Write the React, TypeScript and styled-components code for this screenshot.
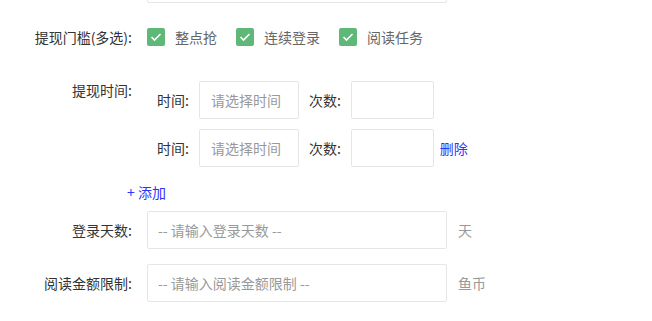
import styled, { createGlobalStyle } from "styled-components";

const Global = createGlobalStyle`
  html, body {
    margin: 0;
    padding: 0;
    background: #fff;
    overflow: hidden;
  }
  body {
    font-family: "Noto Sans CJK SC", "Noto Sans", sans-serif;
    font-size: 14px;
    color: #333;
  }
`;

const Form = styled.div`
  margin-top: -35px;
  display: flex;
  flex-direction: column;
`;

const Item = styled.div`
  display: flex;
  align-items: flex-start;
  margin-bottom: 15px;
`;

const Label = styled.label`
  width: 132px;
  margin-right: 15px;
  flex-shrink: 0;
  text-align: right;
  line-height: 20px;
  padding: 9px 0;
  white-space: nowrap;
  color: #333;
`;

const Block = styled.div`
  display: flex;
  align-items: center;
  min-height: 38px;
`;

const Input = styled.div<{ $w: number; $pad?: number }>`
  box-sizing: border-box;
  width: ${(p) => p.$w}px;
  height: 38px;
  border: 1px solid #e6e6e6;
  border-radius: 2px;
  padding-left: ${(p) => p.$pad ?? 10}px;
  display: flex;
  align-items: center;
  color: #999;
  white-space: nowrap;
`;

const Unit = styled.span`
  margin-left: 11px;
  color: #999;
`;

const Checks = styled.div`
  display: flex;
  align-items: center;
  gap: 19px;
  height: 38px;
`;

const Check = styled.div`
  display: flex;
  align-items: center;
  gap: 10px;
  color: #666;
`;

const Box = styled.span`
  width: 18px;
  height: 18px;
  border-radius: 2px;
  background: #5fb878;
  display: flex;
  align-items: center;
  justify-content: center;
`;

const TimeList = styled.div`
  display: flex;
  flex-direction: column;
  gap: 10px;
  padding-top: 10px;
`;

const TimeRow = styled.div`
  display: flex;
  align-items: center;
  padding-left: 10px;
`;

const SubLabel = styled.span<{ $lead?: boolean }>`
  margin-right: 10px;
  margin-left: ${(p) => (p.$lead ? 0 : 10)}px;
  color: #333;
`;

const Link = styled.span<{ $ml?: number }>`
  color: #3232ff;
  cursor: pointer;
  margin-left: ${(p) => p.$ml ?? 0}px;
`;

const AddRow = styled.div`
  padding-left: 127px;
  line-height: 20px;
  margin-bottom: 9px;
`;

const items = ["整点抢", "连续登录", "阅读任务"];

function Tick() {
  return (
    <svg width="12" height="10" viewBox="0 0 12 10">
      <polyline points="1.5,5 4.5,8 10.5,2" fill="none" stroke="#fff" strokeWidth="1.6" />
    </svg>
  );
}

export default function App() {
  return (
    <>
      <Global />
      <Form>
        <Item>
          <Label></Label>
          <Input $w={300}></Input>
        </Item>
        <Item>
          <Label>提现门槛(多选):</Label>
          <Checks>
            {items.map((t) => (
              <Check key={t}>
                <Box>
                  <Tick />
                </Box>
                {t}
              </Check>
            ))}
          </Checks>
        </Item>
        <Item>
          <Label>提现时间:</Label>
          <TimeList>
            {[0, 1].map((i) => (
              <TimeRow key={i}>
                <SubLabel $lead>时间:</SubLabel>
                <Input $w={100} $pad={11}>请选择时间</Input>
                <SubLabel>次数:</SubLabel>
                <Input $w={83}></Input>
                {i === 1 && <Link $ml={6}>删除</Link>}
              </TimeRow>
            ))}
          </TimeList>
        </Item>
        <AddRow>
          <Link>+ 添加</Link>
        </AddRow>
        <Item>
          <Label>登录天数:</Label>
          <Block>
            <Input $w={300}>-- 请输入登录天数 --</Input>
            <Unit>天</Unit>
          </Block>
        </Item>
        <Item>
          <Label>阅读金额限制:</Label>
          <Block>
            <Input $w={300}>-- 请输入阅读金额限制 --</Input>
            <Unit>鱼币</Unit>
          </Block>
        </Item>
      </Form>
    </>
  );
}
